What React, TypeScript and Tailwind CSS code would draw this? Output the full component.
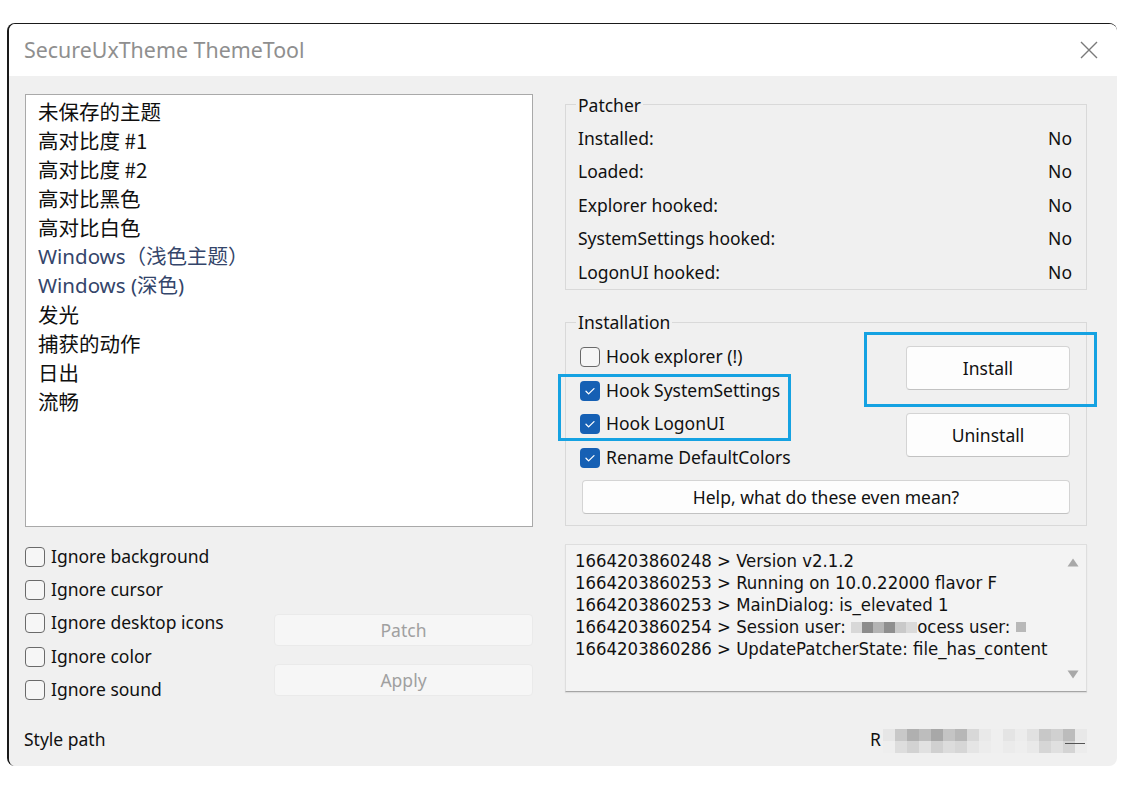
import React from 'react';

const ui = { fontFamily: '"Noto Sans", "Noto Sans CJK SC", sans-serif' };
const logFont = { fontFamily: '"DejaVu Sans Condensed", "DejaVu Sans", "Noto Sans CJK SC", sans-serif' };

const themes = [
  { name: '未保存的主题' },
  { name: '高对比度 #1' },
  { name: '高对比度 #2' },
  { name: '高对比黑色' },
  { name: '高对比白色' },
  { name: 'Windows（浅色主题）', tint: true },
  { name: 'Windows (深色)', tint: true },
  { name: '发光' },
  { name: '捕获的动作' },
  { name: '日出' },
  { name: '流畅' },
];

const patcherRows = ['Installed:', 'Loaded:', 'Explorer hooked:', 'SystemSettings hooked:', 'LogonUI hooked:'];

const logLines = [
  '1664203860248 > Version v2.1.2',
  '1664203860253 > Running on 10.0.22000 flavor F',
  '1664203860253 > MainDialog: is_elevated 1',
];

const Checkbox = ({ checked, label }: { checked?: boolean; label: string }) => (
  <div className="flex items-center gap-[6px]">
    {checked ? (
      <div className="w-[20px] h-[20px] rounded-[4px] bg-[#1660b4] flex items-center justify-center">
        <svg width="14" height="14" viewBox="0 0 14 14" fill="none">
          <path d="M3 7.3l2.6 2.6L11 4.6" stroke="white" strokeWidth="1.3" strokeLinecap="round" strokeLinejoin="round" />
        </svg>
      </div>
    ) : (
      <div className="w-[20px] h-[20px] rounded-[4px] border-[1.5px] border-[#6a6a6a] bg-[#f6f6f6]" />
    )}
    <span className="text-[17.5px] text-[#111] leading-none">{label}</span>
  </div>
);

const Button = ({ label, disabled, className }: { label: string; disabled?: boolean; className: string }) => (
  <div
    className={`flex items-center justify-center rounded-[4px] text-[17.5px] ${
      disabled
        ? 'bg-[#f6f6f6] border border-[#eaeaea] text-[#a0a0a0]'
        : 'bg-[#fdfdfd] border border-[#d4d4d4] border-b-[#c2c2c2] text-[#111]'
    } ${className}`}
  >
    {label}
  </div>
);

// pixelated redaction blocks
const Mosaic = ({ cols, rows, colors, cell }: { cols: number; rows: number; colors: string[]; cell: number }) => (
  <span className="inline-grid align-middle" style={{ gridTemplateColumns: `repeat(${cols}, ${cell}px)` }}>
    {Array.from({ length: cols * rows }).map((_, i) => (
      <span key={i} style={{ width: cell, height: cell, background: colors[i % colors.length] }} />
    ))}
  </span>
);

export default function App() {
  return (
    <div className="relative w-[1125px] h-[787px] bg-white pt-[23px] pl-[7px]" style={ui}>
      <div className="w-[1110px] h-[743px] rounded-[8px] overflow-hidden border-l-[2px] border-t-[1px] border-[#1a1a1a] flex flex-col">
        {/* Title bar */}
        <div className="h-[52px] bg-white flex items-center justify-between pl-[15px] pr-[19px]">
          <span className="text-[21.4px] text-[#8f8f8f]">SecureUxTheme ThemeTool</span>
          <svg width="18" height="18" viewBox="0 0 18 18">
            <path d="M1 1l16 16M17 1L1 17" stroke="#7a7a7a" strokeWidth="1.4" />
          </svg>
        </div>

        {/* Body */}
        <div className="flex-1 bg-[#f0f0f0] flex pl-[16px] pt-[18px] gap-[32px]">
          {/* Left column */}
          <div className="w-[508px] flex flex-col">
            <div className="h-[433px] bg-white border-[1.5px] border-[#a9a9a9] pt-[2px] pl-[12px]">
              {themes.map((t) => (
                <div
                  key={t.name}
                  className={`h-[29px] leading-[29px] text-[20.5px] ${t.tint ? 'text-[#34456a]' : 'text-[#0f0f0f]'}`}
                  style={{ fontFamily: t.tint ? '"Noto Sans", "Noto Sans CJK SC", sans-serif' : '"Noto Sans CJK SC", "Noto Sans", sans-serif' }}
                >
                  {t.name}
                </div>
              ))}
            </div>

            <div className="flex mt-[13px]">
              <div className="w-[250px] flex flex-col">
                {['Ignore background', 'Ignore cursor', 'Ignore desktop icons', 'Ignore color', 'Ignore sound'].map((l) => (
                  <div key={l} className="h-[33.3px] flex items-center">
                    <Checkbox label={l} />
                  </div>
                ))}
              </div>
              <div className="w-[260px] flex flex-col pt-[74px] gap-[18px]">
                <Button label="Patch" disabled className="h-[32px]" />
                <Button label="Apply" disabled className="h-[32px]" />
              </div>
            </div>

            <div className="mt-[21px] h-[24px] flex items-center text-[17.5px] text-[#111] -ml-[1px]">Style path</div>
          </div>

          {/* Right column */}
          <div className="w-[522px] flex flex-col">
            <fieldset className="border border-[#d9d9d9] pl-[10px] pr-[14px] pt-[7px] h-[196px]">
              <legend className="px-[2px] text-[17.5px] leading-[18px] pt-[2px] text-[#111]">Patcher</legend>
              {patcherRows.map((r) => (
                <div key={r} className="h-[33.5px] flex items-center justify-between pl-[2px] text-[17.5px] text-[#111]">
                  <span>{r}</span>
                  <span>No</span>
                </div>
              ))}
            </fieldset>

            <fieldset className="mt-[23px] border border-[#d9d9d9] pl-[10px] pr-[16px] pt-[9px] h-[213px]">
              <legend className="px-[2px] text-[17.5px] leading-[18px] text-[#111]">Installation</legend>
              <div className="flex">
                <div className="flex-1 flex flex-col pl-[4px]">
                  <div className="h-[33.7px] flex items-center"><Checkbox label="Hook explorer (!)" /></div>
                  <div className="h-[33.7px] flex items-center"><Checkbox checked label="Hook SystemSettings" /></div>
                  <div className="h-[33.7px] flex items-center"><Checkbox checked label="Hook LogonUI" /></div>
                  <div className="h-[33.7px] flex items-center"><Checkbox checked label="Rename DefaultColors" /></div>
                </div>
                <div className="w-[164px] flex flex-col pt-[6px] gap-[23px]">
                  <Button label="Install" className="h-[44px]" />
                  <Button label="Uninstall" className="h-[44px]" />
                </div>
              </div>
              <Button label="Help, what do these even mean?" className="h-[34px] mt-[5px] ml-[6px]" />
            </fieldset>

            <div className="mt-[18px] h-[148px] flex bg-[#f3f3f3] border border-[#dedede] border-b-[#a5a5a5] shadow-[0_1px_1px_rgba(0,0,0,0.08)]">
              <div className="flex-1 pt-[5px] pl-[9px] overflow-hidden text-[18.4px] leading-[22px] text-[#111] whitespace-nowrap" style={logFont}>
                {logLines.map((l) => (
                  <div key={l}>{l}</div>
                ))}
                <div className="flex items-center">
                  <span>1664203860254 &gt; Session user:&nbsp;</span>
                  <Mosaic cols={6} rows={1} cell={11} colors={['#d8d8d8', '#8c8c8c', '#b4b4b4', '#8f8f8f', '#c9c9c9', '#dadada']} />
                  <span>ocess user:&nbsp;</span>
                  <Mosaic cols={1} rows={1} cell={10} colors={['#b8b8b8']} />
                </div>
                <div>1664203860286 &gt; UpdatePatcherState: file_has_content</div>
              </div>
              <div className="w-[27px] flex flex-col items-center justify-between pt-[13px] pb-[12px]">
                <svg width="12" height="9" viewBox="0 0 12 9"><path d="M6 0.5L11.5 8.5H0.5z" fill="#a8a8a8" /></svg>
                <svg width="12" height="9" viewBox="0 0 12 9"><path d="M0.5 0.5H11.5L6 8.5z" fill="#a8a8a8" /></svg>
              </div>
            </div>

            <div className="mt-[35px] h-[24px] flex items-center pl-[305px] text-[17.5px] text-[#111]">
              <span>R</span>
              <div className="relative ml-[2px]">
                <Mosaic
                  cols={17}
                  rows={2}
                  cell={12}
                  colors={[
                    '#e6e6e6', '#c8c8c8', '#b0b0b0', '#bdbdbd', '#a8a8a8', '#c4c4c4', '#b7b7b7', '#d8d8d8', '#e9e9e9', '#efefef', '#e4e4e4', '#ececec', '#e1e1e1', '#c8c8c8', '#d0d0d0', '#bcbcbc', '#e8e8e8',
                    '#eeeeee', '#dddddd', '#d2d2d2', '#e1e1e1', '#d0d0d0', '#dcdcdc', '#d6d6d6', '#e5e5e5', '#ececec', '#efefef', '#ebebeb', '#eeeeee', '#e9e9e9', '#d6d6d6', '#e0e0e0', '#d4d4d4', '#ececec',
                  ]}
                />
                <span className="absolute right-[2px] bottom-[9px] w-[20px] h-[1px] bg-[#555]" />
              </div>
            </div>
          </div>
        </div>
      </div>

      {/* annotation highlights */}
      <div className="absolute left-[558px] top-[374px] w-[233px] h-[67px] border-[3px] border-[#15a2e2]" />
      <div className="absolute left-[864px] top-[332px] w-[233px] h-[75px] border-[3px] border-[#15a2e2]" />
    </div>
  );
}
